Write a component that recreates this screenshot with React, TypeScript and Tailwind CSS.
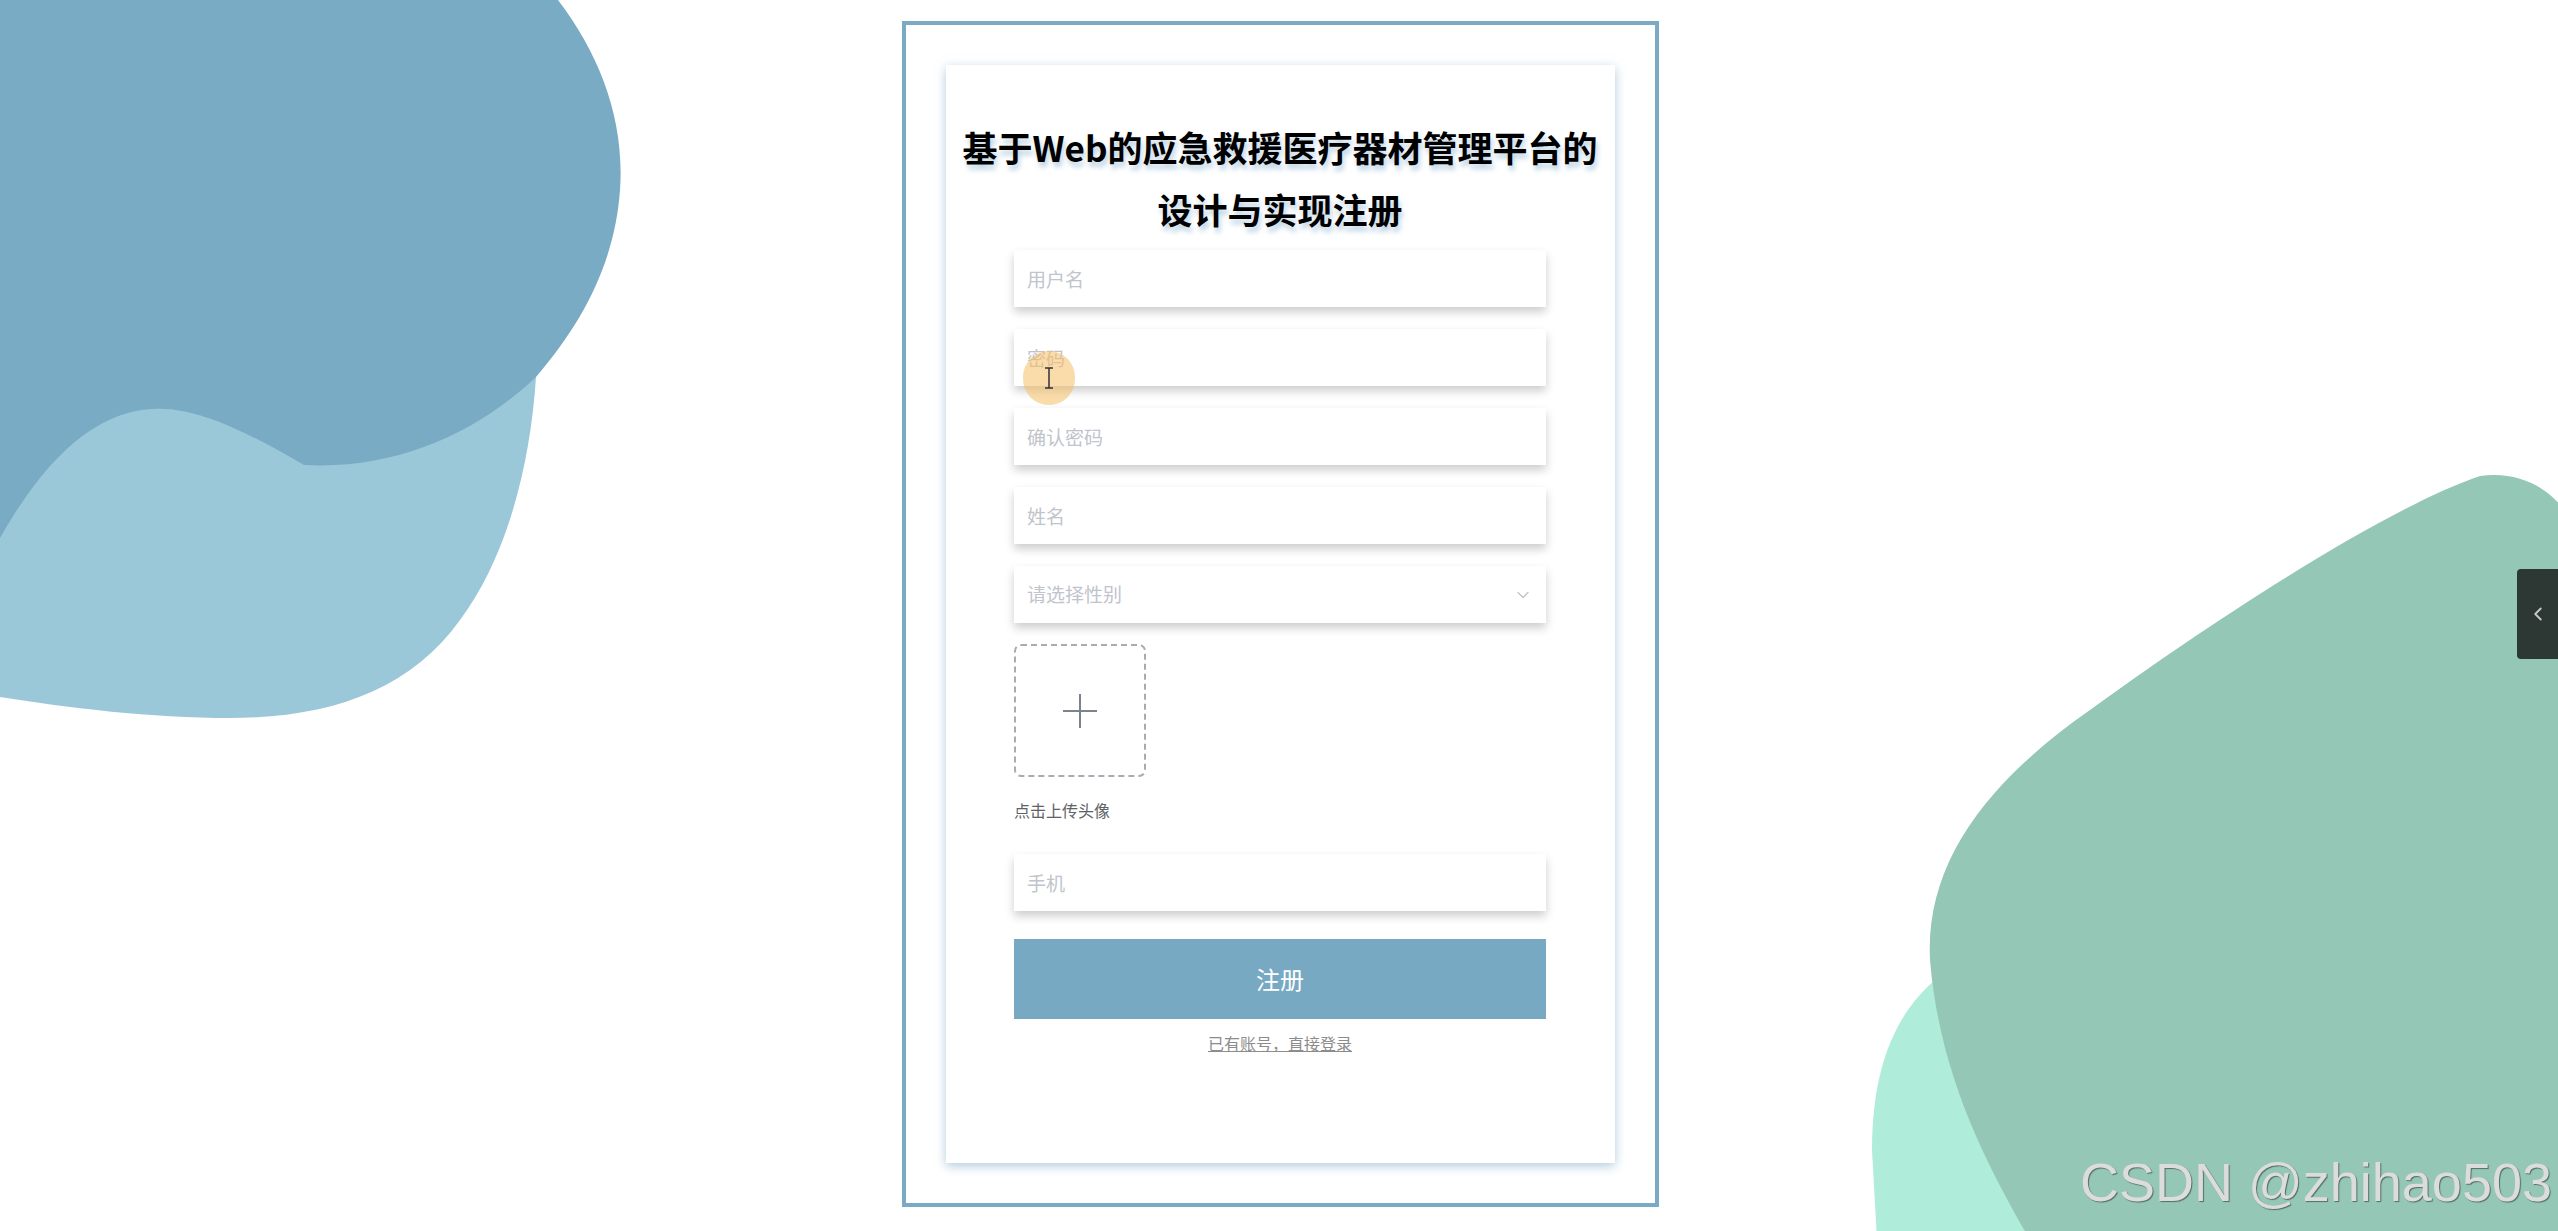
import { ChevronDown, ChevronLeft } from 'lucide-react';

const fieldCls =
  'block w-full h-[57px] px-[13px] bg-white text-[19px] text-[#606266] placeholder:text-[#c0c4cc] outline-none shadow-[0_5px_9px_rgba(0,0,0,0.2)]';

function Blobs() {
  return (
    <svg className="absolute inset-0 w-[2558px] h-[1231px]" viewBox="0 0 2558 1231" fill="none">
      {/* top left */}
      <path
        d="M0,300 L540,300 L536,377 C530,470 505,560 460,620 C410,690 330,718 230,718 C150,718 70,708 0,697 Z"
        fill="#9ac8d8"
      />
      <path
        d="M0,0 L558,0 C600,55 625,120 620,190 C615,260 585,320 536,377 C480,430 400,470 304,465 C260,440 200,405 152,409 C100,412 50,450 0,538 Z"
        fill="#79abc4"
      />
      {/* bottom right */}
      <path d="M1935,980 C1900,1010 1872,1060 1872,1150 L1877,1240 L2100,1240 L2100,980 Z" fill="#afecda" />
      <path
        d="M2480,476 C2520,470 2555,490 2570,520 L2570,1240 L2030,1240 C1990,1170 1940,1080 1930,960 C1925,860 1990,780 2090,710 C2200,630 2380,510 2480,476 Z"
        fill="#95c7b6"
      />
    </svg>
  );
}

export default function App() {
  return (
    <div className="relative w-full h-[1231px] overflow-hidden bg-white font-['Noto_Sans_CJK_SC',sans-serif]">
      <Blobs />

      <div className="relative flex justify-center pt-[21px] pl-[2px]">
        <div className="border-[4px] border-[#7aaac4] p-[40px]">
          <div className="w-[669px] h-[1098px] bg-white pt-[51px] shadow-[0_3px_10px_rgba(110,160,195,0.55)]">
            <h1 className="text-center text-[35px] leading-[62px] font-bold text-black whitespace-nowrap mb-[10px] [text-shadow:2px_5px_5px_rgba(110,160,195,0.45)]">
              基于Web的应急救援医疗器材管理平台的
              <br />
              设计与实现注册
            </h1>

            <div className="w-[532px] mx-auto">
              <input className={`${fieldCls} mb-[22px]`} placeholder="用户名" />
              <input type="password" className={`${fieldCls} mb-[22px]`} placeholder="密码" />
              <input type="password" className={`${fieldCls} mb-[22px]`} placeholder="确认密码" />
              <input className={`${fieldCls} mb-[22px]`} placeholder="姓名" />

              <div className="flex items-center justify-between h-[57px] px-[13px] bg-white shadow-[0_5px_9px_rgba(0,0,0,0.2)]">
                <span className="text-[19px] text-[#c0c4cc]">请选择性别</span>
                <ChevronDown size={20} strokeWidth={1.5} className="text-[#c0c4cc]" />
              </div>

              <div className="mt-[21px] w-[132px] h-[133px] rounded-[7px] border-2 border-dashed border-[#a8abb2] flex items-center justify-center">
                <svg width="36" height="36" viewBox="0 0 36 36">
                  <path d="M18 1V35M1 18H35" stroke="#7d838c" strokeWidth="2" />
                </svg>
              </div>

              <div className="mt-[22px] text-[16px] leading-[22px] text-[#606266]">点击上传头像</div>

              <input className={`${fieldCls} mt-[33px]`} placeholder="手机" />

              <button className="mt-[28px] w-full h-[80px] bg-[#78a9c3] text-white text-[24px]">注册</button>

              <div className="mt-[12px] text-center">
                <a className="text-[16px] leading-[22px] text-[#8c8c8c] underline">已有账号，直接登录</a>
              </div>
            </div>
          </div>
        </div>
      </div>

      {/* mouse cursor highlight */}
      <div className="absolute left-[1023px] top-[351px] w-[52px] h-[54px] rounded-full bg-[rgba(245,190,100,0.55)] flex items-center justify-center">
        <svg width="10" height="22" viewBox="0 0 10 22">
          <path d="M1 1H9M5 1V21M1 21H9" stroke="#333" strokeWidth="1.5" />
        </svg>
      </div>

      {/* side tab */}
      <div className="absolute right-0 top-[569px] w-[41px] h-[90px] rounded-l-[4px] bg-[#2d3834] flex items-center justify-center">
        <ChevronLeft size={22} strokeWidth={2} className="text-[#c8c8c8]" />
      </div>

      {/* watermark */}
      <div className="absolute right-[6px] bottom-[22px] font-['Liberation_Sans',sans-serif] text-[54px] leading-none text-[#dcdcdc] [text-shadow:1px_1px_1px_rgba(0,0,0,0.45)]">
        CSDN @zhihao503
      </div>
    </div>
  );
}
